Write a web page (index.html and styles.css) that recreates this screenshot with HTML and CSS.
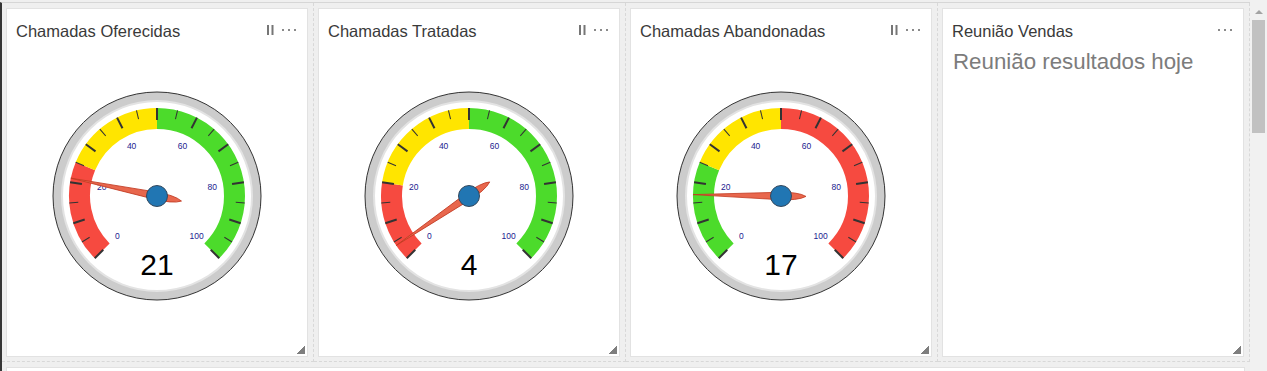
FILE: index.html
```html
<!DOCTYPE html>
<html lang="pt">
<head>
<meta charset="utf-8">
<title>Painel</title>
<link rel="stylesheet" href="styles.css">
</head>
<body>
<div class="page">
  <div class="main">
    <div class="frame">
      <div class="board">
        <div class="cell">
          <div class="card">
            <div class="card-head">
              <span class="card-title">Chamadas Oferecidas</span>
              <span class="card-tools">
                <svg class="ico-pause" width="7" height="10" viewBox="0 0 7 10"><rect x="0" y="0" width="2" height="10"/><rect x="4.5" y="0" width="2" height="10"/></svg>
                <svg class="ico-more" width="14" height="2" viewBox="0 0 14 2"><rect x="0" y="0" width="2" height="2"/><rect x="6" y="0" width="2" height="2"/><rect x="12" y="0" width="2" height="2"/></svg>
              </span>
            </div>
            <div class="card-body gauge-body">
              <svg class="gauge" width="220" height="220" viewBox="-110 -110 220 220">
                <defs>
                  <g id="face">
                    <circle r="104" fill="#cccccc" stroke="#333333" stroke-width="1"/>
                    <circle r="95" fill="#ffffff" stroke="#e3e3e3" stroke-width="2"/>
                  </g>
                  <g id="ticks" stroke="#333333">
                    <line y1="-88" y2="-76" stroke-width="2" transform="rotate(-135)"/>
                    <line y1="-88" y2="-79" stroke-width="1" transform="rotate(-121.5)"/>
                    <line y1="-88" y2="-76" stroke-width="2" transform="rotate(-108)"/>
                    <line y1="-88" y2="-79" stroke-width="1" transform="rotate(-94.5)"/>
                    <line y1="-88" y2="-76" stroke-width="2" transform="rotate(-81)"/>
                    <line y1="-88" y2="-79" stroke-width="1" transform="rotate(-67.5)"/>
                    <line y1="-88" y2="-76" stroke-width="2" transform="rotate(-54)"/>
                    <line y1="-88" y2="-79" stroke-width="1" transform="rotate(-40.5)"/>
                    <line y1="-88" y2="-76" stroke-width="2" transform="rotate(-27)"/>
                    <line y1="-88" y2="-79" stroke-width="1" transform="rotate(-13.5)"/>
                    <line y1="-88" y2="-76" stroke-width="2" transform="rotate(0)"/>
                    <line y1="-88" y2="-79" stroke-width="1" transform="rotate(13.5)"/>
                    <line y1="-88" y2="-76" stroke-width="2" transform="rotate(27)"/>
                    <line y1="-88" y2="-79" stroke-width="1" transform="rotate(40.5)"/>
                    <line y1="-88" y2="-76" stroke-width="2" transform="rotate(54)"/>
                    <line y1="-88" y2="-79" stroke-width="1" transform="rotate(67.5)"/>
                    <line y1="-88" y2="-76" stroke-width="2" transform="rotate(81)"/>
                    <line y1="-88" y2="-79" stroke-width="1" transform="rotate(94.5)"/>
                    <line y1="-88" y2="-76" stroke-width="2" transform="rotate(108)"/>
                    <line y1="-88" y2="-79" stroke-width="1" transform="rotate(121.5)"/>
                    <line y1="-88" y2="-76" stroke-width="2" transform="rotate(135)"/>
                  </g>
                  <g id="labels" class="glabels">
                    <text x="-39.6" y="42.6">0</text>
                    <text x="-55.3" y="-5.8">20</text>
                    <text x="-25.4" y="-46.9">40</text>
                    <text x="25.4" y="-46.9">60</text>
                    <text x="55.3" y="-5.8">80</text>
                    <text x="39.6" y="42.6">100</text>
                  </g>
                  <path id="needle" d="M0,-88 L3.6,-4 Q4.6,17 0,25 Q-4.6,17 -3.6,-4 Z" fill="#e8674d" stroke="#c23a22" stroke-width="0.8"/>
                </defs>
                <use href="#face"/>
                <circle class="band" r="77.5" pathLength="360" stroke="#f64a40" stroke-dasharray="67.5 360" transform="rotate(-225)"/>
                <circle class="band" r="77.5" pathLength="360" stroke="#ffe500" stroke-dasharray="67.5 360" transform="rotate(-157.5)"/>
                <circle class="band" r="77.5" pathLength="360" stroke="#4cdb2b" stroke-dasharray="135 360" transform="rotate(-90)"/>
                <use href="#ticks"/>
                <use href="#labels"/>
                <text class="gval" y="78.5">21</text>
                <use href="#needle" transform="rotate(-78.3)"/>
                <circle class="cap" r="10.5"/>
              </svg>
            </div>
            <span class="resize"></span>
          </div>
        </div>

        <div class="cell">
          <div class="card">
            <div class="card-head">
              <span class="card-title">Chamadas Tratadas</span>
              <span class="card-tools">
                <svg class="ico-pause" width="7" height="10" viewBox="0 0 7 10"><rect x="0" y="0" width="2" height="10"/><rect x="4.5" y="0" width="2" height="10"/></svg>
                <svg class="ico-more" width="14" height="2" viewBox="0 0 14 2"><rect x="0" y="0" width="2" height="2"/><rect x="6" y="0" width="2" height="2"/><rect x="12" y="0" width="2" height="2"/></svg>
              </span>
            </div>
            <div class="card-body gauge-body">
              <svg class="gauge" width="220" height="220" viewBox="-110 -110 220 220">
                <use href="#face"/>
                <circle class="band" r="77.5" pathLength="360" stroke="#f64a40" stroke-dasharray="54 360" transform="rotate(-225)"/>
                <circle class="band" r="77.5" pathLength="360" stroke="#ffe500" stroke-dasharray="81 360" transform="rotate(-171)"/>
                <circle class="band" r="77.5" pathLength="360" stroke="#4cdb2b" stroke-dasharray="135 360" transform="rotate(-90)"/>
                <use href="#ticks"/>
                <use href="#labels"/>
                <text class="gval" y="78.5">4</text>
                <use href="#needle" transform="rotate(-124.2)"/>
                <circle class="cap" r="10.5"/>
              </svg>
            </div>
            <span class="resize"></span>
          </div>
        </div>

        <div class="cell">
          <div class="card">
            <div class="card-head">
              <span class="card-title">Chamadas Abandonadas</span>
              <span class="card-tools">
                <svg class="ico-pause" width="7" height="10" viewBox="0 0 7 10"><rect x="0" y="0" width="2" height="10"/><rect x="4.5" y="0" width="2" height="10"/></svg>
                <svg class="ico-more" width="14" height="2" viewBox="0 0 14 2"><rect x="0" y="0" width="2" height="2"/><rect x="6" y="0" width="2" height="2"/><rect x="12" y="0" width="2" height="2"/></svg>
              </span>
            </div>
            <div class="card-body gauge-body">
              <svg class="gauge" width="220" height="220" viewBox="-110 -110 220 220">
                <use href="#face"/>
                <circle class="band" r="77.5" pathLength="360" stroke="#4cdb2b" stroke-dasharray="67.5 360" transform="rotate(-225)"/>
                <circle class="band" r="77.5" pathLength="360" stroke="#ffe500" stroke-dasharray="67.5 360" transform="rotate(-157.5)"/>
                <circle class="band" r="77.5" pathLength="360" stroke="#f64a40" stroke-dasharray="135 360" transform="rotate(-90)"/>
                <use href="#ticks"/>
                <use href="#labels"/>
                <text class="gval" y="78.5">17</text>
                <use href="#needle" transform="rotate(-89.1)"/>
                <circle class="cap" r="10.5"/>
              </svg>
            </div>
            <span class="resize"></span>
          </div>
        </div>

        <div class="cell">
          <div class="card">
            <div class="card-head">
              <span class="card-title">Reunião Vendas</span>
              <span class="card-tools">
                <svg class="ico-more" width="14" height="2" viewBox="0 0 14 2"><rect x="0" y="0" width="2" height="2"/><rect x="6" y="0" width="2" height="2"/><rect x="12" y="0" width="2" height="2"/></svg>
              </span>
            </div>
            <div class="card-body text-body">
              <p class="note">Reunião resultados hoje</p>
            </div>
            <span class="resize"></span>
          </div>
        </div>

        <div class="cell cell-wide">
          <div class="card card-short"></div>
        </div>
      </div>
    </div>
  </div>
  <div class="scrollbar">
    <span class="sb-arrow"></span>
    <span class="sb-thumb"></span>
  </div>
</div>
</body>
</html>
```

FILE: styles.css
```css
* { box-sizing: border-box; }

html, body {
  margin: 0;
  padding: 0;
  height: 100%;
  overflow: hidden;
}

body {
  background: #efefef;
  font-family: "Liberation Sans", Arial, sans-serif;
  color: #333;
}

.page {
  display: flex;
  height: 371px;
  overflow: hidden;
}

.main {
  flex: 1;
  padding-top: 2px;
  min-width: 0;
  height: 371px;
  overflow: hidden;
}

.frame {
  height: 100%;
  border-top: 1px solid #d6d6d6;
  border-left: 2px solid #363636;
}

.board {
  display: grid;
  grid-template-columns: repeat(4, 1fr);
}

.cell {
  padding: 5px 5px 4px 4px;
  border-right: 1px dashed #d8d8d8;
  border-bottom: 1px dashed #d8d8d8;
}

.cell-wide {
  grid-column: 1 / span 4;
  border-right: none;
}

.card {
  position: relative;
  height: 349px;
  background: #ffffff;
  border: 1px solid #e2e2e2;
  display: flex;
  flex-direction: column;
}

.card-short {
  height: 100px;
}

.card-head {
  height: 39px;
  padding: 12px 11px 0 9px;
  display: flex;
  justify-content: space-between;
  align-items: flex-start;
}

.card-title {
  font-size: 16.5px;
  line-height: 20px;
  color: #3a3a3a;
  white-space: nowrap;
}

.card-tools {
  display: flex;
  align-items: center;
  gap: 8px;
  margin-top: 4px;
  height: 10px;
}

.ico-pause { fill: #767676; display: block; }
.ico-more { fill: #8a8a8a; display: block; }

.gauge-body {
  display: flex;
  justify-content: center;
  padding-top: 38px;
}

.gauge {
  display: block;
  overflow: visible;
}

.band {
  fill: none;
  stroke-width: 21;
}

.glabels text {
  font-family: "Liberation Sans", Arial, sans-serif;
  font-size: 8.5px;
  fill: #22228f;
  text-anchor: middle;
}

.gval {
  font-family: "Liberation Sans", Arial, sans-serif;
  font-size: 30px;
  fill: #000000;
  text-anchor: middle;
}

.cap {
  fill: #2176b3;
  stroke: #34495e;
  stroke-width: 1;
}

.text-body {
  padding: 1px 10px 0 10px;
}

.note {
  margin: 0;
  font-size: 22.3px;
  line-height: 26px;
  color: #7c7c7c;
}

.resize {
  position: absolute;
  right: 2px;
  bottom: 2px;
  width: 8px;
  height: 8px;
  background: linear-gradient(135deg, transparent 50%, #7e7e7e 50%);
}

.scrollbar {
  width: 17px;
  flex: 0 0 17px;
  background: #f1f1f1;
  display: flex;
  flex-direction: column;
  align-items: center;
}

.sb-arrow {
  margin-top: 10px;
  width: 0;
  height: 0;
  border-left: 4px solid transparent;
  border-right: 4px solid transparent;
  border-bottom: 4px solid #a3a3a3;
}

.sb-thumb {
  margin-top: 6px;
  width: 13px;
  height: 113px;
  background: #c1c1c1;
}
```
